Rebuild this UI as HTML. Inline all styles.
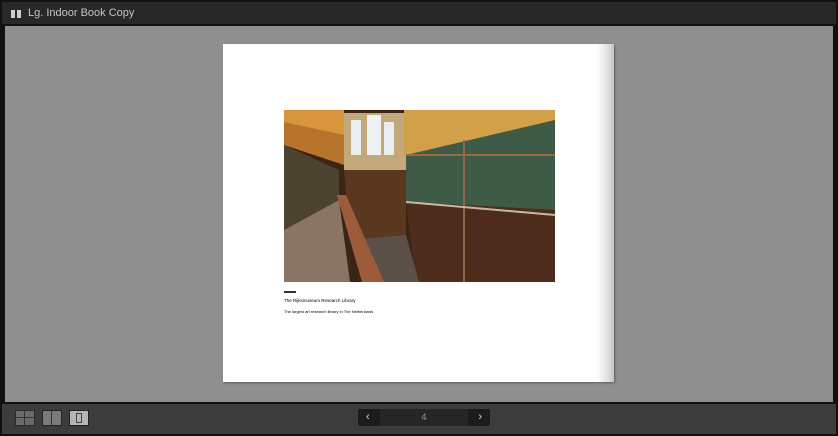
<!DOCTYPE html>
<html><head><style>
*{margin:0;padding:0;box-sizing:border-box}
body{width:838px;height:436px;background:#111;position:relative;overflow:hidden;font-family:"Liberation Sans",sans-serif}
#title{position:absolute;left:2px;top:2px;width:834px;height:22px;background:#282828;color:#c4c4c4;font-size:11px;line-height:22px;padding-left:26px;font-weight:500}
#title .ic{position:absolute;left:9px;top:8px;width:10px;height:8px;border-left:4px solid #ccc;border-right:4px solid #ccc;}
#stage{position:absolute;left:5px;top:26px;width:828px;height:376px;background:#8f8f8f}
#page{position:absolute;left:223px;top:44px;width:391px;height:338px;background:linear-gradient(90deg,#fff 0,#fff 95.5%,#e6e6e6 98%,#c4c4c4 100%);box-shadow:1px 1px 2px rgba(0,0,0,.35)}
#bottom{position:absolute;left:2px;top:404px;width:834px;height:30px;background:#3c3c3c}
.b{position:absolute;top:6px;width:20px;height:16px;border:1px solid #222;}
#nav{position:absolute;left:356px;top:5px;width:132px;height:17px;background:#1c1c1c;border-radius:2px;color:#aaa;font-size:9px;text-align:center;line-height:17px}
#nav .m{position:absolute;left:22px;width:88px;top:0;height:17px;background:#262626}
#nav span{position:absolute;top:0;color:#ddd;font-size:11px}
</style></head><body>
<div id="title"><div class="ic"></div>Lg. Indoor Book Copy</div>
<div id="stage"></div>
<div id="page">
<svg style="position:absolute;left:61px;top:66px" width="271" height="172" viewBox="0 0 271 172">
<rect width="271" height="172" fill="#3a2414"/>
<polygon points="0,0 60,0 60,55 0,35" fill="#b8732c"/>
<polygon points="0,0 60,0 60,25 0,12" fill="#d8953c"/>
<polygon points="60,3 122,3 122,60 60,60" fill="#c2a87a"/>
<rect x="67" y="10" width="10" height="35" fill="#e8eef0"/><rect x="83" y="5" width="14" height="40" fill="#eef2f4"/><rect x="100" y="12" width="10" height="33" fill="#e8eef0"/>
<polygon points="120,0 271,0 271,25 120,45" fill="#d2a048"/>
<polygon points="122,45 271,10 271,100 122,92" fill="#3f5a46"/>
<polygon points="122,92 271,100 271,172 132,172" fill="#4e2c1c"/>
<polygon points="0,35 55,60 55,90 0,120" fill="#4c4230"/>
<polygon points="0,120 55,90 66,172 0,172" fill="#8a7464"/>
<polygon points="60,60 122,60 122,130 66,130" fill="#5a3820"/>
<polygon points="66,130 122,125 135,172 90,172" fill="#5a5048"/>
<polygon points="53,85 62,85 100,172 78,172" fill="#9c5c3a"/>
<line x1="180" y1="30" x2="180" y2="172" stroke="#8a6a4a" stroke-width="2"/>
<line x1="122" y1="92" x2="271" y2="105" stroke="#c8b8a0" stroke-width="2"/>
<line x1="122" y1="45" x2="271" y2="45" stroke="#9a6a3a" stroke-width="2"/>
</svg>
<div style="position:absolute;left:61px;top:247px;width:12px;height:2px;background:#333"></div>
<div style="position:absolute;left:61px;top:254px;font-size:4.5px;color:#000">The Rijksmuseum Research Library</div>
<div style="position:absolute;left:61px;top:265px;font-size:4px;color:#000">The largest art research library in The Netherlands</div>
</div>
<div id="bottom">
<div class="b" style="left:13px;background:#6a6a6a;border-color:#2a2a2a"><div style="position:absolute;left:8px;top:0;width:1px;height:14px;background:#333"></div><div style="position:absolute;left:0;top:6px;width:18px;height:1px;background:#333"></div></div>
<div class="b" style="left:40px;background:#7a7a7a"><div style="position:absolute;left:8px;top:0;width:1px;height:14px;background:#333"></div></div>
<div class="b" style="left:67px;background:#b5b5b5"><div style="position:absolute;left:6px;top:2px;width:6px;height:10px;border:1px solid #444"></div></div>
<div id="nav"><div class="m"></div><span style="left:8px">‹</span><span style="right:8px">›</span><span style="left:0;right:0;color:#999;font-size:9px">4</span></div>
</div>
</body></html>
